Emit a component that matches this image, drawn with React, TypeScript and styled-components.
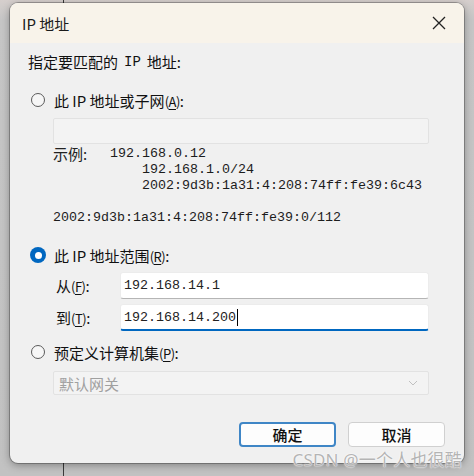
import React from "react";
import styled, { createGlobalStyle } from "styled-components";

const Global = createGlobalStyle`
  html, body { margin: 0; padding: 0; }
  body {
    width: 474px;
    height: 476px;
    overflow: hidden;
    background:
      linear-gradient(to right, transparent 63px, #3a3a3a 63px, #3a3a3a 64px, transparent 64px),
      linear-gradient(to bottom, #d6cfcd 0px, #c6c6c6 20px, #c2c2c2 100%);
    font-family: "Noto Sans CJK SC", "Noto Sans", sans-serif;
  }
`;

const Page = styled.div`
  position: relative;
  width: 474px;
  height: 476px;
  padding: 3px 10px 0 10px;
  box-sizing: border-box;
`;

const Dialog = styled.div`
  position: relative;
  width: 454px;
  height: 460px;
  background: #f0f0f0;
  border-radius: 8px;
  box-shadow: 0 0 0 1px rgba(0,0,0,0.25), 0 2px 8px rgba(0,0,0,0.35);
  display: flex;
  flex-direction: column;
  overflow: hidden;
`;

const TitleBar = styled.div`
  height: 40px;
  flex: none;
  background: #f8f3ea;
  display: flex;
  align-items: center;
  justify-content: space-between;
  padding: 0 18px 0 12px;
`;

const Title = styled.div`
  font-size: 15px;
  color: #1a1a1a;
`;

const Body = styled.div`
  flex: 1;
  display: flex;
  flex-direction: column;
  padding: 0 35px 0 18px;
`;

const Heading = styled.div`
  margin-top: 9px;
  height: 20px;
  line-height: 20px;
  font-size: 15px;
  color: #111;
  display: flex;
  align-items: center;
`;

const Mono = styled.span`
  font-family: "Liberation Mono", "DejaVu Sans Mono", monospace;
  font-size: 14px;
  margin: 0 6px;
`;

const RadioRow = styled.div<{ $mt: number }>`
  margin-top: ${p => p.$mt}px;
  height: 20px;
  display: flex;
  align-items: center;
  gap: 9px;
  padding-left: 3px;
  font-size: 15px;
  color: #111;
`;

const RadioCircle = styled.span<{ $checked?: boolean }>`
  border-radius: 50%;
  box-sizing: border-box;
  flex: none;
  display: flex;
  align-items: center;
  justify-content: center;
  border: ${p => (p.$checked ? "none" : "1px solid #5a5a5a")};
  background: ${p => (p.$checked ? "#0067c0" : "#f6f6f6")};
  width: ${p => (p.$checked ? "16px" : "14px")};
  height: ${p => (p.$checked ? "16px" : "14px")};
  margin-left: ${p => (p.$checked ? "-1px" : "0")};
  margin-right: ${p => (p.$checked ? "-1px" : "0")};
  &::after {
    content: "";
    display: ${p => (p.$checked ? "block" : "none")};
    width: 7px;
    height: 7px;
    border-radius: 50%;
    background: #fff;
  }
`;

const Mn = styled.span`
  font-size: 13px;
  letter-spacing: -0.5px;
  u { text-decoration-thickness: 1px; text-underline-offset: 2px; }
`;

const Indent = styled.div`
  padding-left: 25px;
  display: flex;
  flex-direction: column;
`;

const DisabledBox = styled.div<{ $mt: number; $h: number }>`
  margin-top: ${p => p.$mt}px;
  height: ${p => p.$h}px;
  box-sizing: border-box;
  border: 1px solid #e2e2e2;
  background: #f3f3f3;
  border-radius: 2px;
  display: flex;
  align-items: center;
  justify-content: space-between;
  padding: 0 10px 0 5px;
  font-size: 15px;
  color: #a0a0a0;
`;

const Examples = styled.div`
  margin-top: 2px;
  display: grid;
  grid-template-columns: 57px auto;
  font-family: "Liberation Mono", "DejaVu Sans Mono", monospace;
  font-size: 13.33px;
  line-height: 16px;
  color: #1c1c1c;
`;

const ExLabel = styled.span`
  font-family: "Noto Sans CJK SC", sans-serif;
  font-size: 15px;
  color: #222;
`;

const ExLine = styled.div<{ $pad?: number }>`
  padding-left: ${p => p.$pad ?? 0}px;
  white-space: pre;
  grid-column: 2;
`;

const V6 = styled.div`
  margin-top: 16px;
  height: 16px;
  line-height: 16px;
  font-family: "Liberation Mono", "DejaVu Sans Mono", monospace;
  font-size: 13.33px;
  color: #1c1c1c;
`;

const FieldRow = styled.div<{ $mt: number }>`
  margin-top: ${p => p.$mt}px;
  height: 27px;
  display: flex;
  align-items: center;
`;

const FieldLabel = styled.div`
  width: 67px;
  padding-left: 3px;
  box-sizing: border-box;
  font-size: 15px;
  color: #111;
  flex: none;
`;

const TextInput = styled.div<{ $focused?: boolean }>`
  flex: 1;
  height: 27px;
  box-sizing: border-box;
  background: #fff;
  border: 1px solid #ececec;
  border-bottom: ${p => (p.$focused ? "2px solid #0067c0" : "1px solid #b5b5b5")};
  border-radius: 3px;
  display: flex;
  align-items: center;
  padding: ${p => (p.$focused ? "1px 0 0 3px" : "0 0 0 3px")};
  font-family: "Liberation Mono", "DejaVu Sans Mono", monospace;
  font-size: 13.33px;
  color: #222;
`;

const Caret = styled.span`
  display: inline-block;
  width: 1px;
  height: 17px;
  background: #000;
  margin-left: 1px;
`;

const Buttons = styled.div`
  margin-top: 27px;
  display: flex;
  justify-content: flex-end;
  gap: 12px;
  margin-right: -16px;
`;

const Button = styled.button<{ $primary?: boolean }>`
  width: 97px;
  height: 25px;
  box-sizing: border-box;
  border-radius: 4px;
  background: #fdfdfd;
  border: ${p => (p.$primary ? "2px solid #3f86c6" : "1px solid #d0d0d0")};
  font-family: "Noto Sans CJK SC", sans-serif;
  font-size: 15px;
  font-weight: 500;
  color: #111;
  padding: 0;
  display: flex;
  align-items: center;
  justify-content: center;
`;

const Watermark = styled.div`
  position: absolute;
  right: 12px;
  bottom: 6px;
  line-height: 20px;
  font-family: "Noto Sans", "Noto Sans CJK SC", sans-serif;
  font-size: 17px;
  color: #b4b4b4;
  text-shadow: 0 0 1px #fff, 0 0 2px #fff;
  letter-spacing: 0.2px;
`;

const Radio = ({ checked, children, mt }: { checked?: boolean; children: React.ReactNode; mt: number }) => (
  <RadioRow $mt={mt}>
    <RadioCircle $checked={checked} />
    <span>{children}</span>
  </RadioRow>
);

export default function App() {
  return (
    <>
      <Global />
      <Page>
        <Dialog>
          <TitleBar>
            <Title>IP 地址</Title>
            <svg width="14" height="14" viewBox="0 0 14 14">
              <path d="M1 1 L13 13 M13 1 L1 13" stroke="#222" strokeWidth="1.3" fill="none" />
            </svg>
          </TitleBar>
          <Body>
            <Heading>
              指定要匹配的<Mono>IP</Mono>地址:
            </Heading>
            <Radio mt={18}>
              此 IP 地址或子网<Mn>(<u>A</u>)</Mn>:
            </Radio>
            <Indent>
              <DisabledBox $mt={8} $h={26} />
              <Examples>
                <ExLabel>示例:</ExLabel>
                <ExLine>192.168.0.12</ExLine>
                <ExLine $pad={32}>192.168.1.0/24</ExLine>
                <ExLine $pad={32}>2002:9d3b:1a31:4:208:74ff:fe39:6c43</ExLine>
              </Examples>
              <V6>2002:9d3b:1a31:4:208:74ff:fe39:0/112</V6>
            </Indent>
            <Radio mt={19} checked>
              此 IP 地址范围<Mn>(<u>R</u>)</Mn>:
            </Radio>
            <Indent>
              <FieldRow $mt={7}>
                <FieldLabel>从<Mn>(<u>F</u>)</Mn>:</FieldLabel>
                <TextInput>192.168.14.1</TextInput>
              </FieldRow>
              <FieldRow $mt={5}>
                <FieldLabel>到<Mn>(<u>T</u>)</Mn>:</FieldLabel>
                <TextInput $focused>
                  192.168.14.200<Caret />
                </TextInput>
              </FieldRow>
            </Indent>
            <Radio mt={11}>
              预定义计算机集<Mn>(<u>P</u>)</Mn>:
            </Radio>
            <Indent>
              <DisabledBox $mt={9} $h={24}>
                <span>默认网关</span>
                <svg width="10" height="6" viewBox="0 0 10 6">
                  <path d="M1 1 L5 5 L9 1" stroke="#c0c0c0" strokeWidth="1" fill="none" />
                </svg>
              </DisabledBox>
            </Indent>
            <Buttons>
              <Button $primary>确定</Button>
              <Button>取消</Button>
            </Buttons>
          </Body>
        </Dialog>
        <Watermark>CSDN @一个人也很酷</Watermark>
      </Page>
    </>
  );
}
